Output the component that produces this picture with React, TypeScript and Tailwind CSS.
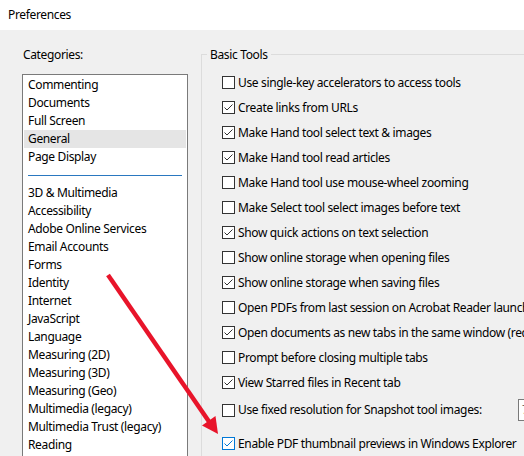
import React from "react";

const categoriesTop = ["Commenting", "Documents", "Full Screen", "General", "Page Display"];
const categoriesBottom = [
  "3D & Multimedia",
  "Accessibility",
  "Adobe Online Services",
  "Email Accounts",
  "Forms",
  "Identity",
  "Internet",
  "JavaScript",
  "Language",
  "Measuring (2D)",
  "Measuring (3D)",
  "Measuring (Geo)",
  "Multimedia (legacy)",
  "Multimedia Trust (legacy)",
  "Reading",
  "Review",
];

const options: [string, boolean][] = [
  ["Use single-key accelerators to access tools", false],
  ["Create links from URLs", true],
  ["Make Hand tool select text & images", true],
  ["Make Hand tool read articles", true],
  ["Make Hand tool use mouse-wheel zooming", false],
  ["Make Select tool select images before text", false],
  ["Show quick actions on text selection", true],
  ["Show online storage when opening files", false],
  ["Show online storage when saving files", true],
  ["Open PDFs from last session on Acrobat Reader launch", false],
  ["Open documents as new tabs in the same window (requires relaunch)", true],
  ["Prompt before closing multiple tabs", false],
  ["View Starred files in Recent tab", true],
];

function CheckBox({ checked, focus }: { checked: boolean; focus?: boolean }) {
  const color = focus ? "#0078d7" : "#333333";
  return (
    <span
      className={
        "flex h-[13px] w-[13px] shrink-0 items-center justify-center bg-white border " +
        (focus ? "border-[#0078d7]" : "border-[#333333]")
      }
    >
      {checked && (
        <svg width="11" height="11" viewBox="0 0 11 11">
          <path d="M1.5 5.5 L4 8 L9.5 2.5" fill="none" stroke={color} strokeWidth="1" />
        </svg>
      )}
    </span>
  );
}

function Row({ label, checked }: { label: string; checked: boolean }) {
  return (
    <div className="flex h-[25px] items-center gap-[3px] whitespace-nowrap">
      <CheckBox checked={checked} />
      <span>{label}</span>
    </div>
  );
}

export default function App() {
  return (
    <div
      className="relative h-[456px] w-[524px] overflow-hidden bg-[#f0f0f0] text-[12px] leading-[16px] tracking-[-0.35px] text-black"
      style={{ fontFamily: '"Noto Sans", "Open Sans", sans-serif' }}
    >
      {/* title bar */}
      <div className="flex h-[30px] items-center bg-white pl-[8px]">Preferences</div>

      <div className="flex">
        {/* categories */}
        <div className="ml-[22px] w-[166px] shrink-0 pt-[17px]">
          <div className="pl-[1px]">Categories:</div>
          <div className="mt-[11px] h-[400px] border border-[#7a7a7a] bg-white px-[1px] pt-[1px]">
            {categoriesTop.map((c) => (
              <div
                key={c}
                className={"flex h-[18px] items-center pl-[4px] " + (c === "General" ? "bg-[#e5e5e5]" : "")}
              >
                {c}
              </div>
            ))}
            <div className="flex h-[18px] items-center px-[4px]">
              <div className="h-px w-full bg-[#2a78c0]" />
            </div>
            {categoriesBottom.map((c) => (
              <div key={c} className="flex h-[18px] items-center pl-[4px]">
                {c}
              </div>
            ))}
          </div>
        </div>

        {/* basic tools group */}
        <div className="ml-[13px] mt-[24px] w-[400px] shrink-0 border-l border-t border-[#dcdcdc]">
          <div className="-mt-[8px] ml-[5px] w-fit bg-[#f0f0f0] px-[3px]">Basic Tools</div>
          <div className="pl-[20px] pt-[7px]">
            {options.map(([l, c]) => (
              <Row key={l} label={l} checked={c} />
            ))}
            <div className="flex h-[30px] items-center whitespace-nowrap">
              <CheckBox checked={false} />
              <span className="ml-[3px] w-[280px] shrink-0">Use fixed resolution for Snapshot tool images:</span>
              <span className="flex h-[22px] w-[40px] items-center border border-[#7a7a7a] bg-white pl-[3px] text-[#6d6d6d]">
                72
              </span>
            </div>
            <div className="mt-[6px] flex h-[25px] items-center gap-[3px] whitespace-nowrap">
              <CheckBox checked focus />
              <span>Enable PDF thumbnail previews in Windows Explorer</span>
            </div>
          </div>
        </div>
      </div>

      {/* red annotation arrow */}
      <svg className="pointer-events-none absolute left-0 top-0" width="524" height="456">
        <line x1="108" y1="275" x2="210" y2="423" stroke="#e8142a" strokeWidth="4.5" />
        <polygon points="218,434 202,425.5 215.5,416" fill="#e8142a" />
      </svg>
    </div>
  );
}
